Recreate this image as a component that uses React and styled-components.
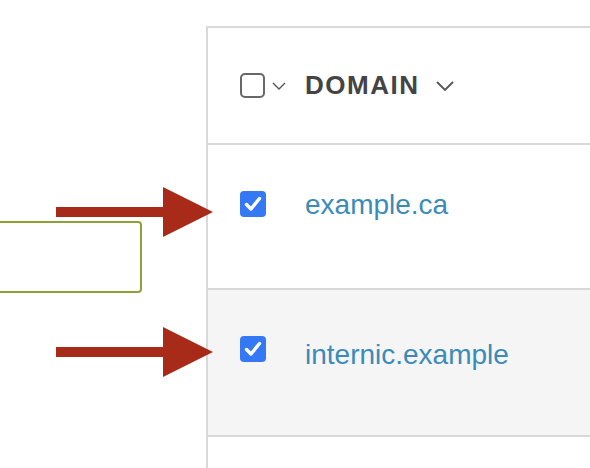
import React from 'react'
import styled, { createGlobalStyle } from 'styled-components'

const GlobalStyle = createGlobalStyle`
  html, body, #root {
    margin: 0;
    height: 100%;
  }
  body {
    background: #ffffff;
    font-family: "Liberation Sans", Arial, sans-serif;
    overflow: hidden;
  }
`

const Page = styled.div`
  position: relative;
  display: flex;
  height: 100%;
  padding-top: 26px;
  box-sizing: border-box;
`

const Sidebar = styled.div`
  width: 206px;
  flex: none;
  padding-top: 195px;
`

const OutlineBox = styled.div`
  margin-left: -20px;
  width: 162px;
  height: 72px;
  box-sizing: border-box;
  border: 2px solid #8ba237;
  border-radius: 4px;
`

const Table = styled.div`
  flex: 1;
  border-top: 2px solid #d9d9d9;
  border-left: 2px solid #d9d9d9;
`

const HeaderRow = styled.div`
  display: grid;
  grid-template-columns: 65px 1fr;
  align-items: center;
  height: 115px;
  padding-left: 32px;
  border-bottom: 2px solid #d9d9d9;
`

const Row = styled.div`
  display: grid;
  grid-template-columns: 65px 1fr;
  align-items: start;
  height: ${p => p.$height}px;
  box-sizing: border-box;
  padding: 46px 0 0 32px;
  background: ${p => (p.$shaded ? '#f5f5f5' : '#ffffff')};
  border-bottom: 2px solid #d9d9d9;
`

const SelectAll = styled.div`
  display: flex;
  align-items: center;
  gap: 7px;
`

const EmptyBox = styled.span`
  width: 25px;
  height: 25px;
  box-sizing: border-box;
  border: 2px solid #686868;
  border-radius: 5px;
`

const CheckedBox = styled.span`
  display: flex;
  align-items: center;
  justify-content: center;
  width: 26px;
  height: 26px;
  border-radius: 4px;
  background: #3478f6;
`

const ColumnTitle = styled.div`
  display: flex;
  align-items: center;
  gap: 17px;
  font-size: 26px;
  font-weight: 700;
  letter-spacing: 1.5px;
  color: #444444;
`

const DomainLink = styled.a`
  margin-top: ${p => p.$offset || 0}px;
  font-size: 28px;
  line-height: 26px;
  color: #3b8bb8;
  text-decoration: none;
`

const Arrow = styled.svg`
  position: absolute;
  left: 56px;
  top: ${p => p.$top}px;
`

const Chevron = ({ w, h, stroke }) => (
  <svg width={w} height={h} viewBox={`0 0 ${w} ${h}`} fill="none">
    <path d={`M1 1 L${w / 2} ${h - 1} L${w - 1} 1`} stroke="#555" strokeWidth={stroke} />
  </svg>
)

const Check = () => (
  <svg width="18" height="16" viewBox="0 0 18 16" fill="none">
    <path d="M2.5 8.5 L7 13 L15.5 2.5" stroke="#fff" strokeWidth="3.4" strokeLinecap="round" strokeLinejoin="round" />
  </svg>
)

const PointerArrow = ({ top }) => (
  <Arrow $top={top} width="158" height="50" viewBox="0 0 158 50">
    <rect x="0" y="20" width="110" height="10" fill="#a82b19" />
    <polygon points="107,0 157,25 107,50" fill="#a82b19" />
  </Arrow>
)

const domains = [
  { name: 'example.ca', height: 145, offset: 1 },
  { name: 'internic.example', height: 147, shaded: true, offset: 6 },
]

const App = () => (
  <Page>
    <GlobalStyle />
    <Sidebar>
      <OutlineBox />
    </Sidebar>
    <Table>
      <HeaderRow>
        <SelectAll>
          <EmptyBox />
          <Chevron w={14} h={8} stroke={1.4} />
        </SelectAll>
        <ColumnTitle>
          DOMAIN
          <Chevron w={18} h={10} stroke={1.8} />
        </ColumnTitle>
      </HeaderRow>
      {domains.map(d => (
        <Row key={d.name} $height={d.height} $shaded={d.shaded}>
          <CheckedBox><Check /></CheckedBox>
          <DomainLink href="#" $offset={d.offset}>{d.name}</DomainLink>
        </Row>
      ))}
    </Table>
    <PointerArrow top={187} />
    <PointerArrow top={327} />
  </Page>
)

export default App
